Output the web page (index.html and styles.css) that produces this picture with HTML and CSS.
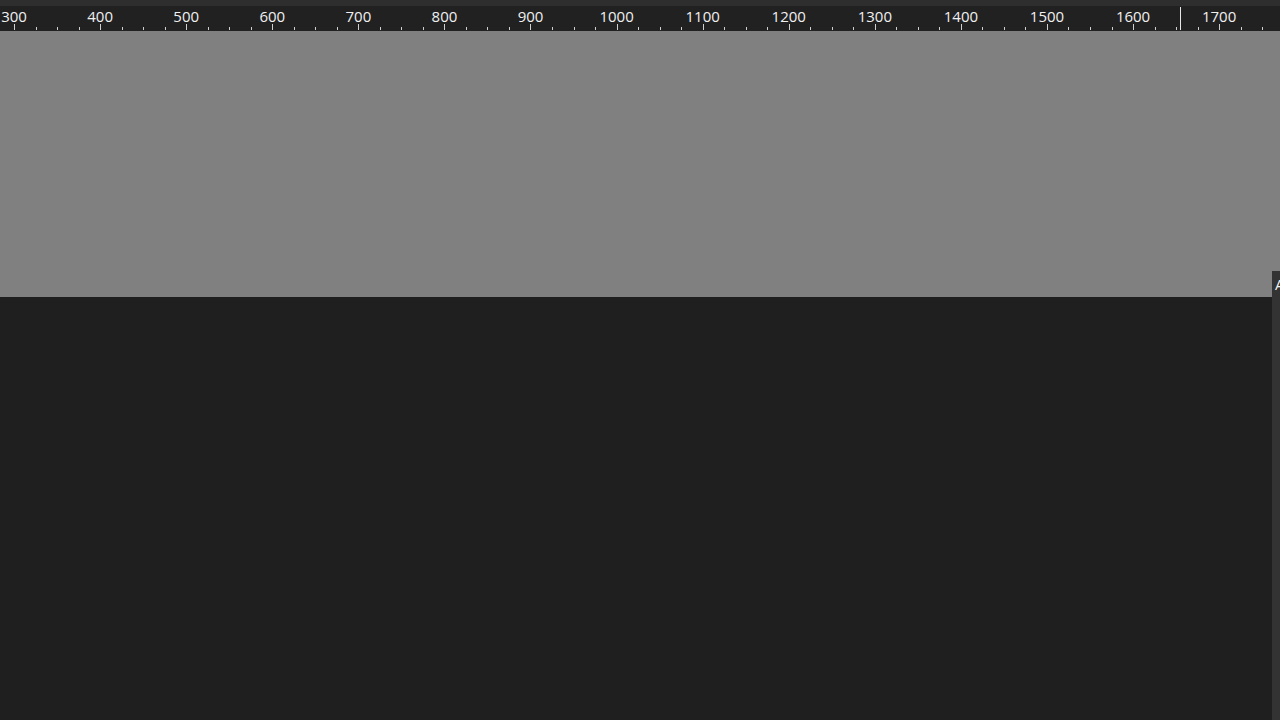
FILE: index.html
```html
<!DOCTYPE html>
<html lang="en">
<head>
  <meta charset="UTF-8">
  <title>Canvas</title>
  <link rel="stylesheet" href="styles.css">
</head>
<body>

  <div class="title-strip"></div>

  <div class="ruler">
    <div class="ruler-labels">
      <span>300</span>
      <span>400</span>
      <span>500</span>
      <span>600</span>
      <span>700</span>
      <span>800</span>
      <span>900</span>
      <span>1000</span>
      <span>1100</span>
      <span>1200</span>
      <span>1300</span>
      <span>1400</span>
      <span>1500</span>
      <span>1600</span>
      <span>1700</span>
    </div>
    <div class="ticks">
      <div class="ticks-major"></div>
      <div class="ticks-minor"></div>
    </div>
    <div class="cursor-line"></div>
  </div>

  <div class="canvas-area"></div>

  <div class="side-panel">
    <span class="panel-letter">A</span>
  </div>

</body>
</html>
```

FILE: styles.css
```css
body {
  margin: 0;
  height: 720px;
  overflow: hidden;
  background: #1f1f1f;
  font-family: "Open Sans", Arial, sans-serif;
  position: relative;
}
.title-strip {
  height: 6px;
  background: #2e2e2e;
}
.ruler {
  position: relative;
  height: 25px;
  background: #212121;
  overflow: hidden;
}
.ruler-labels {
  display: flex;
  margin-left: -29px;
  padding-top: 1px;
  height: 18px;
}
.ruler-labels span {
  flex: 0 0 86.08px;
  text-align: center;
  color: #f0f0f0;
  font-size: 15px;
  line-height: 18px;
}
.ticks {
  position: relative;
  height: 6px;
}
.ticks-major,
.ticks-minor {
  position: absolute;
  left: 14px;
  right: 0;
  bottom: 1px;
}
.ticks-major {
  height: 6px;
  background: repeating-linear-gradient(to right, #cfcfcf 0 1px, transparent 1px 86.08px);
}
.ticks-minor {
  height: 3px;
  background: repeating-linear-gradient(to right, #cfcfcf 0 1px, transparent 1px 21.52px);
}
.cursor-line {
  position: absolute;
  left: 1180px;
  top: 1px;
  bottom: 1px;
  width: 1px;
  background: #e6e6e6;
}
.canvas-area {
  height: 266px;
  background: #808080;
}
.side-panel {
  position: absolute;
  left: 1272px;
  top: 271px;
  right: 0;
  bottom: 0;
  background: #333333;
  overflow: hidden;
}
.panel-letter {
  display: block;
  margin: 4px 0 0 3px;
  color: #f0f0f0;
  font-size: 15px;
  line-height: 18px;
}
```
